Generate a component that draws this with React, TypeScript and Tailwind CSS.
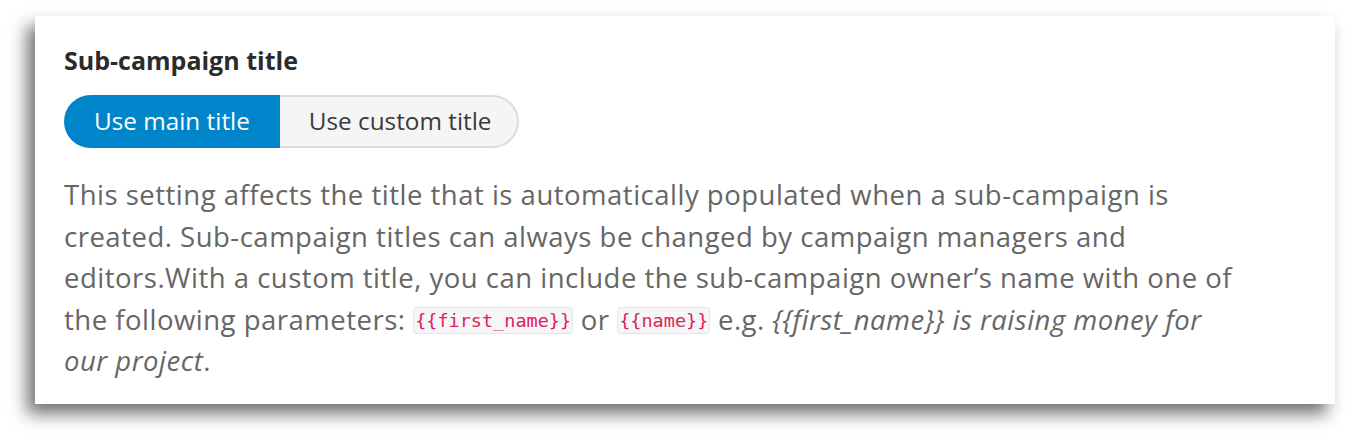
import React, { useState } from "react";

const Code: React.FC<{ children: React.ReactNode }> = ({ children }) => (
  <code className="rounded-[4px] border border-[#e4e4ea] bg-[#f6f6f9] px-[1px] py-[2px] align-[3px] font-['DejaVu_Sans_Mono',monospace] text-[18.5px] leading-[22px] tracking-normal text-[#e01e5a]">
    {children}
  </code>
);

export default function App() {
  const [mode, setMode] = useState<"main" | "custom">("main");

  return (
    <div className="min-h-[434px] bg-white pl-[35px] pt-[16px]">
      <div className="w-[1300px] bg-white px-[29px] pb-[22px] pt-[28px] shadow-[-8px_10px_16px_rgba(0,0,0,0.55)] font-['Open_Sans',sans-serif]">
        <h3 className="text-[25px] font-bold leading-[32px] text-[#2b2b2b]">
          Sub-campaign title
        </h3>
        <div className="mt-[19px] flex h-[53px] w-fit">
          <button
            onClick={() => setMode("main")}
            className={`rounded-l-full px-[30px] text-[24.3px] ${
              mode === "main"
                ? "bg-[#0085ca] text-white"
                : "border border-r-0 border-[#d6d6d6] bg-[#f5f5f5] text-[#3a3a3a]"
            }`}
          >
            Use main title
          </button>
          <button
            onClick={() => setMode("custom")}
            className={`rounded-r-full pl-[29px] pr-[25px] text-[24.3px] ${
              mode === "custom"
                ? "bg-[#0085ca] text-white"
                : "border-2 border-l-0 border-[#dcdcdc] bg-[#f5f5f5] text-[#3a3a3a]"
            }`}
          >
            Use custom title
          </button>
        </div>
        <p className="mt-[26px] whitespace-nowrap text-[27.5px] leading-[41.5px] tracking-[0.5px] text-[#666666]">
          This setting affects the title that is automatically populated when a
          sub-campaign is
          <br />
          created. Sub-campaign titles can always be changed by campaign
          managers and
          <br />
          editors.With a custom title, you can include the sub-campaign owner’s
          name with one of
          <br />
          the following parameters: <Code>{"{{first_name}}"}</Code> or{" "}
          <Code>{"{{name}}"}</Code> e.g.{" "}
          <em>
            {"{{first_name}}"} is raising money for
            <br />
            our project
          </em>
          .
        </p>
      </div>
    </div>
  );
}
